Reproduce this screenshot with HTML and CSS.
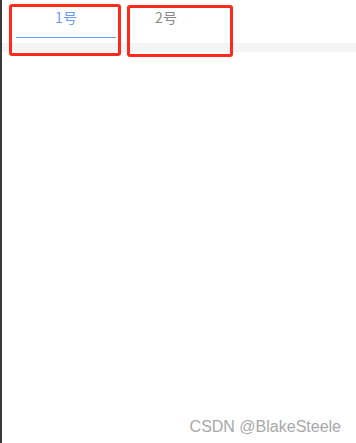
FILE: index.html
```html
<!DOCTYPE html>
<html>

<head>
    <meta charset="UTF-8">
    <meta name="viewport" content="width=device-width, initial-scale=1.0">
    <title>tabs</title>
    <link rel="stylesheet" href="styles.css">
</head>

<body>
    <div class="wrapper">
        <div class="tabs">
            <div class="tab active"><span>1号</span></div>
            <div class="tab"><span>2号</span></div>
        </div>
        <div class="gap"></div>
        <div class="content"></div>

        <!-- 标注框 -->
        <div class="mark mark-1"></div>
        <div class="mark mark-2"></div>

        <div class="watermark">CSDN @BlakeSteele</div>
    </div>
</body>

</html>
```

FILE: styles.css
```css
html,
body {
    margin: 0;
    height: 100%;
    background: #fff;
}

body {
    font-family: "Noto Sans CJK SC", "Liberation Sans", sans-serif;
}

.wrapper {
    position: relative;
    height: 100%;
    border-left: 2px solid #3a3a3a;
    box-sizing: border-box;
}

.tabs {
    display: flex;
    height: 43px;
    padding-left: 14px;
}

.tab {
    width: 100px;
    height: 37px;
    display: flex;
    justify-content: center;
    padding-top: 7px;
    box-sizing: border-box;
    font-size: 14px;
    line-height: 20px;
    color: #8a8a8a;
}

.tab.active {
    color: #6a9cf2;
    border-bottom: 1px solid #6a9cf2;
    height: 38px;
}

.gap {
    height: 9px;
    background: #f4f5f7;
}

.mark {
    position: absolute;
    border: 3px solid #ff2a1c;
    border-radius: 3px;
}

.mark-1 {
    left: 7px;
    top: 4px;
    width: 106px;
    height: 46px;
}

.mark-2 {
    left: 125px;
    top: 5px;
    width: 100px;
    height: 46px;
}

.watermark {
    position: absolute;
    right: 15px;
    bottom: 7px;
    font-family: "Liberation Sans", Arial, sans-serif;
    font-size: 16px;
    color: #a8a8a8;
}
```
